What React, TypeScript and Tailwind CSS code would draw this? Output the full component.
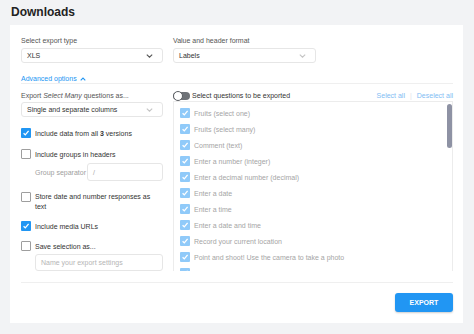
import React from "react";

const items = [
  "Fruits (select one)",
  "Fruits (select many)",
  "Comment (text)",
  "Enter a number (integer)",
  "Enter a decimal number (decimal)",
  "Enter a date",
  "Enter a time",
  "Enter a date and time",
  "Record your current location",
  "Point and shoot! Use the camera to take a photo",
  "Use the camera's microphone to record a sound",
];

function Chevron({ dark }: { dark?: boolean }) {
  return (
    <svg width="7" height="4" viewBox="0 0 7 4" className="shrink-0">
      <path d="M0.8 0.6 L3.5 3.2 L6.2 0.6" stroke={dark ? "#555" : "#c4c4c4"} strokeWidth="1.1" fill="none" />
    </svg>
  );
}

function Sel({ value, dark }: { value: string; dark?: boolean }) {
  return (
    <div className="h-[15px] border border-[#e6e6e6] rounded-[3px] flex items-center justify-between pl-[5px] pr-[9px] text-[#333]">
      <span>{value}</span>
      <Chevron dark={dark} />
    </div>
  );
}

function Check({ light }: { light?: boolean }) {
  return (
    <div className={`w-[10px] h-[10px] rounded-[1px] flex items-center justify-center shrink-0 ${light ? "bg-[#90caf9]" : "bg-[#2196f3]"}`}>
      <svg width="8" height="8" viewBox="0 0 8 8">
        <path d="M1.6 4.2 L3.3 5.9 L6.6 1.8" stroke="#fff" strokeWidth="1.3" fill="none" />
      </svg>
    </div>
  );
}

function Empty() {
  return <div className="w-[10px] h-[10px] rounded-[1px] border border-[#9e9e9e] bg-white shrink-0" />;
}

export default function App() {
  return (
    <div className="w-[474px] h-[334px] overflow-hidden bg-[#f2f3f5] pl-[10px] pr-[11px] font-['Liberation_Sans',Arial,sans-serif] text-[7px] leading-[9px] text-[#333]">
      <div className="h-[25px] pt-[5px] pl-[1px] text-[12px] leading-[14px] font-bold text-[#222]">Downloads</div>
      <div className="bg-white h-[298px] pt-[11px] pl-[11px] pr-[10px] flex flex-col">
        <div className="flex gap-[10px]">
          <div className="w-[142px] flex flex-col">
            <div className="h-[9px] text-[#555]">Select export type</div>
            <div className="mt-[3px]">
              <Sel value="XLS" dark />
            </div>
          </div>
          <div className="w-[143px] flex flex-col">
            <div className="h-[9px] text-[#555]">Value and header format</div>
            <div className="mt-[3px]">
              <Sel value="Labels" />
            </div>
          </div>
        </div>

        <div className="mt-[11px] h-[10px] border-b border-[#efefef] flex items-start gap-[3px] text-[#2196f3]">
          <span>Advanced options</span>
          <svg width="6" height="4" viewBox="0 0 6 4" className="mt-[3px]">
            <path d="M0.7 3.3 L3 1 L5.3 3.3" stroke="#2196f3" strokeWidth="1.1" fill="none" />
          </svg>
        </div>

        <div className="mt-[7px] flex gap-[10px]">
          <div className="w-[142px] flex flex-col">
            <div className="h-[9px] text-[#555]">
              Export <i>Select Many</i> questions as...
            </div>
            <div className="mt-[2px]">
              <Sel value="Single and separate columns" />
            </div>
            <div className="mt-[11px] h-[10px] flex items-center gap-[4px]">
              <Check />
              <span>
                Include data from all <b>3</b> versions
              </span>
            </div>
            <div className="mt-[11px] h-[10px] flex items-center gap-[4px]">
              <Empty />
              <span>Include groups in headers</span>
            </div>
            <div className="mt-[4px] h-[18px] pl-[14px] flex items-center justify-between">
              <span className="text-[#9e9e9e]">Group separator</span>
              <div className="w-[76px] h-[18px] border border-[#e6e6e6] rounded-[3px] flex items-center pl-[5px] text-[#aaa]">/</div>
            </div>
            <div className="mt-[11px] flex items-start gap-[4px] leading-[10px]">
              <Empty />
              <span>
                Store date and number responses as
                <br />
                text
              </span>
            </div>
            <div className="mt-[9px] h-[10px] flex items-center gap-[4px]">
              <Check />
              <span>Include media URLs</span>
            </div>
            <div className="mt-[10px] h-[10px] flex items-center gap-[4px]">
              <Empty />
              <span>Save selection as...</span>
            </div>
            <div className="mt-[3px] ml-[14px] h-[17px] border border-[#e6e6e6] rounded-[3px] flex items-center pl-[5px] text-[#b5b5b5]">
              Name your export settings
            </div>
          </div>

          <div className="flex-1 flex flex-col">
            <div className="h-[9px] flex items-center">
              <div className="relative w-[17px] h-[10px] shrink-0">
                <div className="absolute left-0 top-[1px] w-[17px] h-[8px] rounded-full bg-[#6f7378]" />
                <div className="absolute left-0 top-0 w-[10px] h-[10px] rounded-full bg-white border border-[#5a5e63]" />
              </div>
              <span className="ml-[2px]">Select questions to be exported</span>
              <div className="ml-auto flex items-center text-[#82bdf3]">
                <span>Select all</span>
                <span className="mx-[5px] text-[#dde3ea]">|</span>
                <span>Deselect all</span>
              </div>
            </div>
            <div className="relative mt-[1px] h-[170px] border border-b-0 border-[#ececec] overflow-hidden pt-[3px] pl-[6px]">
              {items.map((t) => (
                <div key={t} className="h-[16px] flex items-center gap-[4px] text-[#a5a5a5] whitespace-nowrap">
                  <Check light />
                  <span>{t}</span>
                </div>
              ))}
              <div className="absolute right-0 top-[2px] w-[5px] h-[44px] rounded-full bg-[#8e92a4]" />
            </div>
          </div>
        </div>

        <div className="mt-[11px] border-t border-[#efefef]" />
        <div className="mt-[10px] flex justify-end">
          <div className="w-[58px] h-[19px] rounded-[3px] bg-[#2196f3] shadow-[0_1px_2px_rgba(0,0,0,0.2)] text-white font-bold flex items-center justify-center">
            EXPORT
          </div>
        </div>
      </div>
    </div>
  );
}
